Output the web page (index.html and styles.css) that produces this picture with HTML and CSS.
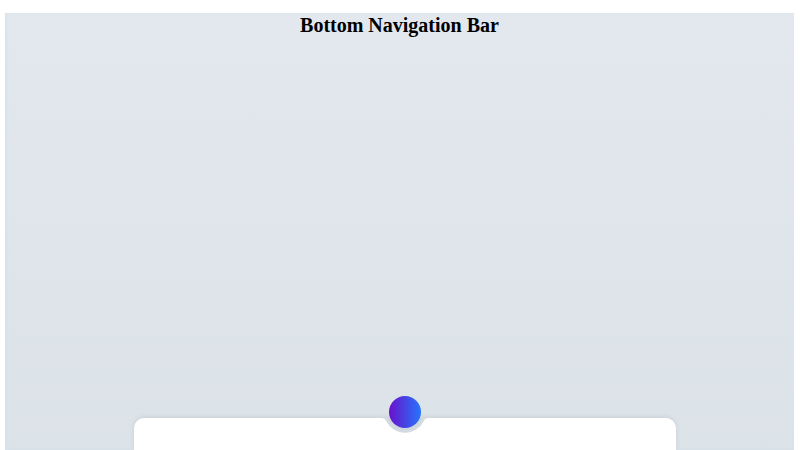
FILE: index.html
```html
<!DOCTYPE html>
<html>
<head>
<meta charset="utf-8">
<link rel="stylesheet" href="styles.css">
</head>
<body>
<div class="page">
  <h1 class="title">Bottom Navigation Bar</h1>
  <div class="content"></div>
  <nav class="nav">
    <svg class="notch" width="60" height="40" viewBox="0 0 60 40">
      <defs>
        <radialGradient id="ng" cx="30" cy="4" r="22" gradientUnits="userSpaceOnUse">
          <stop offset="0.72" stop-color="#ccd3da"/>
          <stop offset="1" stop-color="#d9e0e6"/>
        </radialGradient>
      </defs>
      <path d="M5.8 10 A6 6 0 0 1 11.2 13.3 A21 21 0 0 0 48.8 13.3 A6 6 0 0 1 54.2 10 Z" fill="url(#ng)"/>
    </svg>
    <span class="fab"></span>
  </nav>
</div>
</body>
</html>
```
FILE: styles.css
```css
html, body {
  margin: 0;
  padding: 0;
  background: #ffffff;
}
body {
  padding-top: 13px;
  height: 437px;
  overflow: hidden;
}
.page {
  margin: 0 6px 0 5px;
  height: 437px;
  background: linear-gradient(180deg, #e2e8ee 0%, #dbe2e8 100%);
  box-shadow: inset 2px 0 2px rgba(210, 225, 238, 0.6);
  display: flex;
  flex-direction: column;
  overflow: hidden;
}
.title {
  margin: 0;
  font-family: "Liberation Serif", "Times New Roman", serif;
  font-weight: bold;
  font-size: 20px;
  line-height: 24px;
  text-align: center;
  color: #000;
}
.content {
  height: 381px;
  flex: none;
}
.nav {
  position: relative;
  margin-left: 129px;
  width: 542px;
  height: 32px;
  background: #ffffff;
  border-radius: 10px 10px 0 0;
  box-shadow: 0 -1px 5px rgba(0, 0, 0, 0.08);
  flex: none;
}
.notch {
  position: absolute;
  left: 241px;
  top: -10px;
  display: block;
}
.fab {
  position: absolute;
  left: 255px;
  top: -22px;
  width: 32px;
  height: 32px;
  border-radius: 50%;
  background: linear-gradient(90deg, #6a11cb 0%, #2575fc 100%);
}
```
